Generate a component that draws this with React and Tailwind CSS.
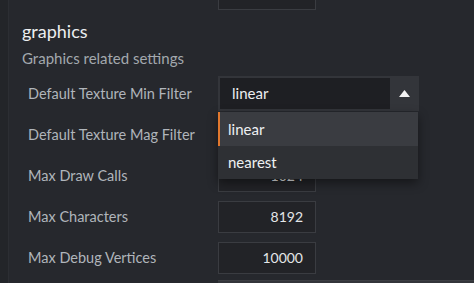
import React from 'react';

const rows = [
  { label: 'Max Draw Calls', value: '1024' },
  { label: 'Max Characters', value: '8192' },
  { label: 'Max Debug Vertices', value: '10000' },
];

const Field = ({ value }) => (
  <div className="w-[98px] h-[32px] border border-[#3a3c41] bg-[#222327] flex items-center justify-end pr-[12px] text-[14px] text-[#e4e6e8]">
    {value}
  </div>
);

const App = () => {
  return (
    <div
      className="w-[474px] h-[283px] overflow-hidden bg-[#26282d] flex"
      style={{ fontFamily: 'Lato, "Liberation Sans", sans-serif' }}
    >
      {/* Left gutter */}
      <div className="w-[9px] shrink-0 bg-[#232529] border-r border-[#2c2e33]" />

      <div className="flex-1 flex flex-col">
        {/* Previous field, cut off at the top */}
        <div className="h-[10px] pl-[209px]">
          <div className="w-[98px] h-[10px] border border-t-0 border-[#3a3c41] bg-[#222327]" />
        </div>

        {/* Section header */}
        <div className="pl-[13px] pt-[10px] text-[18px] leading-[22px] text-[#eceef0]">graphics</div>
        <div className="pl-[13px] pt-[6px] text-[15px] leading-[20px] text-[#a3a8ae]">Graphics related settings</div>

        <div className="flex flex-col pt-[5px]">
          {/* Min filter with open dropdown */}
          <div className="h-[41px] flex items-center relative">
            <div className="w-[209px] pl-[19px] text-[14.5px] text-[#b0b5bb]">Default Texture Min Filter</div>
            <div className="relative">
              <div className="w-[201px] h-[35px] bg-[#33353a] flex">
                <div className="flex-1 m-[2px] mr-0 bg-[#1e1f23] flex items-center pl-[12px] text-[15px] text-[#eceef0]">
                  linear
                </div>
                <div className="w-[29px] flex items-center justify-center">
                  <svg width="11" height="7" viewBox="0 0 11 7">
                    <polygon points="5.5,0 11,7 0,7" fill="#f2f2f2" />
                  </svg>
                </div>
              </div>
              <div className="absolute left-0 top-[36px] w-[200px] z-10 shadow-[0_4px_10px_rgba(0,0,0,0.45)]">
                <div className="h-[34px] bg-[#3a3c41] border-l-2 border-[#e1782e] flex items-center pl-[8px] text-[15px] text-[#eef0f2]">
                  linear
                </div>
                <div className="h-[33px] bg-[#2e3034] flex items-center pl-[10px] text-[15px] text-[#eef0f2]">
                  nearest
                </div>
              </div>
            </div>
          </div>

          <div className="h-[41px] flex items-center">
            <div className="w-[209px] pl-[19px] text-[14.5px] text-[#b0b5bb]">Default Texture Mag Filter</div>
          </div>

          {rows.map((r) => (
            <div key={r.label} className="h-[41px] flex items-center">
              <div className="w-[209px] pl-[19px] text-[14.5px] text-[#b0b5bb]">{r.label}</div>
              <Field value={r.value} />
            </div>
          ))}
        </div>

        {/* Next section bar */}
        <div className="mt-[2px] ml-[209px] h-[10px] bg-[#33353a] border-t border-[#3c3e43]" />
      </div>
    </div>
  );
};

export default App;
